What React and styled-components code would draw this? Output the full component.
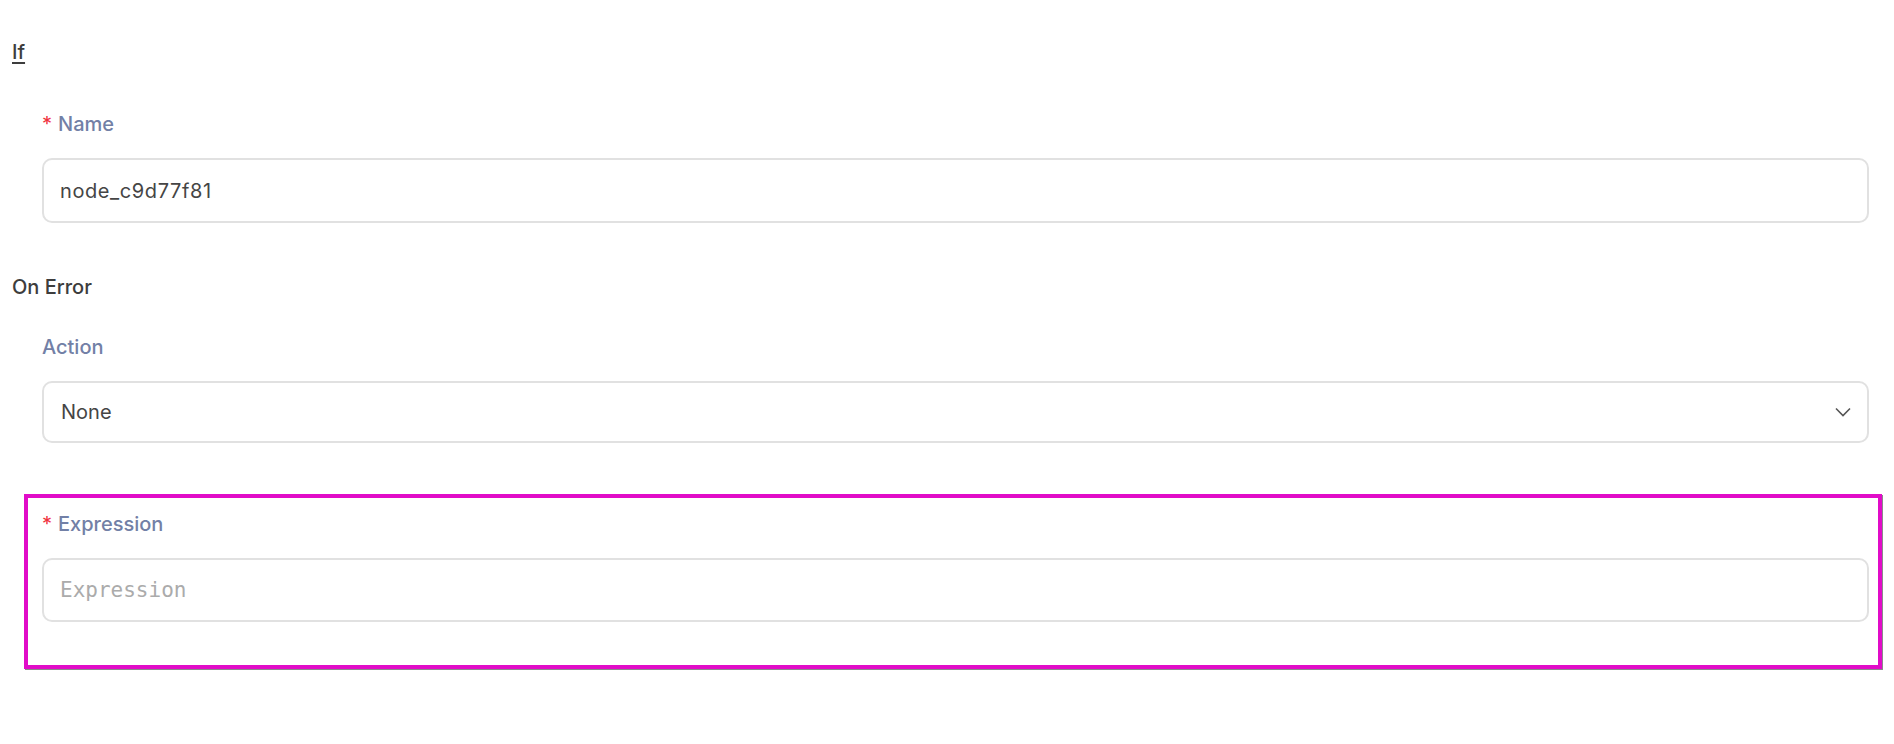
import React, { useState } from "react";
import styled, { createGlobalStyle } from "styled-components";

const GlobalStyle = createGlobalStyle`
  html, body {
    margin: 0;
    padding: 0;
    background: #ffffff;
  }
  body {
    font-family: Inter, "Noto Sans", "Liberation Sans", sans-serif;
    color: #3a3a3a;
  }
`;

const Page = styled.div`
  padding: 38px 12px 40px 12px;
  font-size: 20px;
  line-height: 28px;
`;

const Title = styled.a`
  display: inline-block;
  font-weight: 500;
  color: #3d3d3d;
  text-decoration: underline;
  text-underline-offset: 3px;
  text-decoration-thickness: 2px;
  margin-bottom: 44px;
  cursor: pointer;
`;

const Field = styled.div`
  padding: 0 13px 0 30px;
  margin-bottom: ${(p) => p.$gap || 0}px;
`;

const Label = styled.label`
  display: block;
  font-weight: 500;
  color: #7280a6;
  margin-bottom: 20px;
`;

const Required = styled.span`
  color: #f0303e;
  font-weight: 400;
  margin-right: 6px;
`;

const Input = styled.input`
  display: block;
  box-sizing: border-box;
  width: 100%;
  height: ${(p) => p.$h || 65}px;
  padding: 0 16px;
  border: 2px solid #e1e1e1;
  border-radius: 10px;
  background: #fff;
  font-family: ${(p) =>
    p.$mono
      ? `"DejaVu Sans Mono", "Liberation Mono", monospace`
      : `Inter, "Noto Sans", sans-serif`};
  font-size: ${(p) => (p.$mono ? 21 : 20)}px;
  letter-spacing: ${(p) => (p.$mono ? 0 : 0.6)}px;
  color: #454545;
  outline: none;
  &::placeholder {
    color: #ababab;
  }
`;

const Section = styled.div`
  font-weight: 500;
  color: #3d3d3d;
  margin-bottom: 32px;
`;

const SelectBox = styled.div`
  box-sizing: border-box;
  height: 62px;
  display: flex;
  align-items: center;
  justify-content: space-between;
  padding: 0 16px 0 17px;
  border: 2px solid #e1e1e1;
  border-radius: 10px;
  color: #454545;
  cursor: pointer;
`;

const Highlight = styled.div`
  margin-left: 12px;
  border: 4px solid #e10cc8;
  box-shadow: 1px 1px 0 #8a8a8a;
  padding: 12px 9px 43px 14px;
`;

const Chevron = () => (
  <svg width="16" height="10" viewBox="0 0 16 10" fill="none">
    <path d="M1 1.5 L8 8.5 L15 1.5" stroke="#555" strokeWidth="1.6" />
  </svg>
);

export default function App() {
  const [name, setName] = useState("node_c9d77f81");
  const [expr, setExpr] = useState("");

  return (
    <Page>
      <GlobalStyle />
      <Title>If</Title>

      <Field $gap={50}>
        <Label>
          <Required>*</Required>Name
        </Label>
        <Input value={name} onChange={(e) => setName(e.target.value)} />
      </Field>

      <Section>On Error</Section>

      <Field $gap={51}>
        <Label>Action</Label>
        <SelectBox>
          <span>None</span>
          <Chevron />
        </SelectBox>
      </Field>

      <Highlight>
        <Label>
          <Required>*</Required>Expression
        </Label>
        <Input
          $mono
          $h={64}
          placeholder="Expression"
          value={expr}
          onChange={(e) => setExpr(e.target.value)}
        />
      </Highlight>
    </Page>
  );
}
